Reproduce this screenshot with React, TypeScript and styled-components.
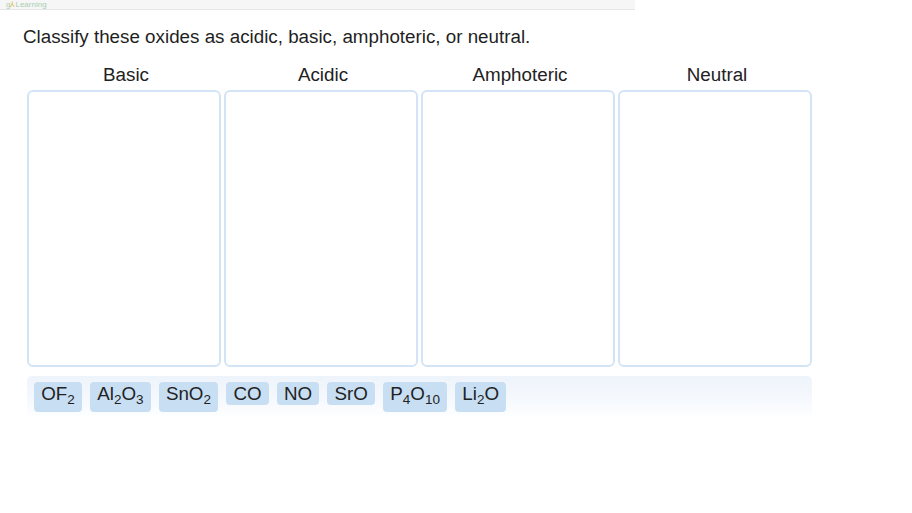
import React from 'react';
import styled, { createGlobalStyle } from 'styled-components';

const GlobalStyle = createGlobalStyle`
  html, body {
    margin: 0;
    padding: 0;
    background: #ffffff;
  }
  body {
    font-family: "Liberation Sans", Arial, Helvetica, sans-serif;
    color: #222222;
  }
`;

// top strip with the faint logo
const TopStrip = styled.div`
  width: 635px;
  height: 9px;
  background: #f6f6f6;
  border-bottom: 1px solid #e6e6e6;
  display: flex;
  align-items: flex-end;
`;

const Logo = styled.div`
  padding-left: 6px;
  font-size: 8px;
  line-height: 9px;
  color: #a9cfb4;
  span {
    color: #e3b948;
  }
`;

const Page = styled.div`
  padding: 16px 0 0 23px;
`;

const Title = styled.div`
  font-size: 18.8px;
  line-height: 22px;
  color: #1f1f1f;
`;

const Board = styled.div`
  margin: 16px 0 0 4px;
  width: 785px;
`;

const Columns = styled.div`
  display: grid;
  grid-template-columns: repeat(4, 194px);
  column-gap: 3px;
`;

const Column = styled.div`
  display: flex;
  flex-direction: column;
`;

const Label = styled.div`
  text-align: center;
  font-size: 18.8px;
  line-height: 22px;
  color: #222222;
  margin-bottom: 4px;
  padding-left: 4px;
`;

const DropBox = styled.div`
  height: 273px;
  border: 2px solid #d3e4f6;
  border-radius: 6px;
  background: #ffffff;
`;

const Tray = styled.div`
  margin-top: 9px;
  padding: 6px 7px 7px;
  border-radius: 5px;
  background: linear-gradient(to bottom, #eef4fb 0%, #f6f9fd 60%, #ffffff 100%);
  display: flex;
  align-items: flex-start;
  gap: 8px;
`;

const Chip = styled.div<{ $tall: boolean }>`
  background: #c8def3;
  border-radius: 4px;
  padding: 2px 7.2px ${(p) => (p.$tall ? '9px' : '2px')} 7.2px;
  font-size: 18.8px;
  line-height: 19px;
  color: #222222;
  white-space: nowrap;
  sub {
    font-size: 13.5px;
    line-height: 0;
    vertical-align: -4px;
  }
`;

type Part = string | { sub: string };

const oxides: Part[][] = [
  ['OF', { sub: '2' }],
  ['Al', { sub: '2' }, 'O', { sub: '3' }],
  ['SnO', { sub: '2' }],
  ['CO'],
  ['NO'],
  ['SrO'],
  ['P', { sub: '4' }, 'O', { sub: '10' }],
  ['Li', { sub: '2' }, 'O'],
];

const hasSub = (parts: Part[]) => parts.some((p) => typeof p !== 'string');

function App() {
  const columns = ['Basic', 'Acidic', 'Amphoteric', 'Neutral'];
  return (
    <>
      <GlobalStyle />
      <TopStrip>
        <Logo>
          g<span>⅄</span>Learning
        </Logo>
      </TopStrip>
      <Page>
        <Title>Classify these oxides as acidic, basic, amphoteric, or neutral.</Title>
        <Board>
          <Columns>
            {columns.map((c) => (
              <Column key={c}>
                <Label>{c}</Label>
                <DropBox />
              </Column>
            ))}
          </Columns>
          <Tray>
            {oxides.map((parts, i) => (
              <Chip key={i} $tall={hasSub(parts)}>
                {parts.map((p, j) =>
                  typeof p === 'string' ? <span key={j}>{p}</span> : <sub key={j}>{p.sub}</sub>
                )}
              </Chip>
            ))}
          </Tray>
        </Board>
      </Page>
    </>
  );
}

export default App;
